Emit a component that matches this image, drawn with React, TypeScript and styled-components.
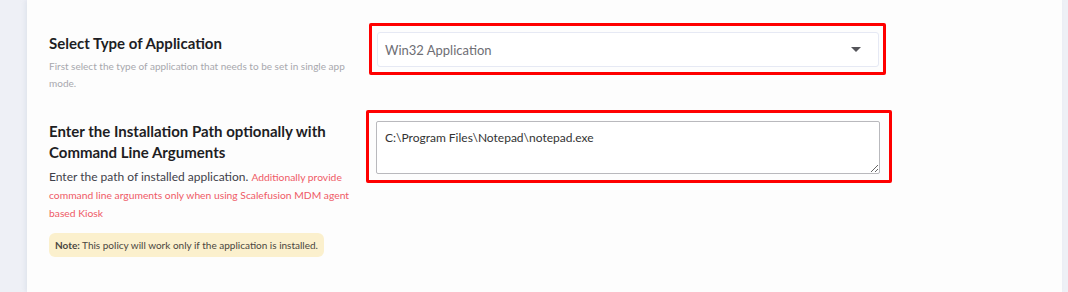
import styled, { createGlobalStyle } from "styled-components";

const Global = createGlobalStyle`
  html, body {
    margin: 0;
    padding: 0;
    background: #eef0f6;
    font-family: Lato, "Noto Sans", sans-serif;
  }
`;

const Page = styled.div`
  display: flex;
  height: 292px;
  overflow: hidden;
`;

const Rail = styled.div`
  width: 27px;
  flex-shrink: 0;
  background: #eef0f6;
`;

const Panel = styled.div`
  flex: 1;
  margin-right: 6px;
  background: #fdfdfd;
  box-shadow: -2px 0 4px rgba(200, 205, 220, 0.35);
  padding: 23px 0 0 22px;
  box-sizing: border-box;
`;

const Row = styled.div<{ $gap?: number }>`
  display: flex;
  align-items: flex-start;
  margin-top: ${(p) => p.$gap ?? 0}px;
`;

const Label = styled.div<{ $top: number }>`
  width: 304px;
  flex-shrink: 0;
  padding-top: ${(p) => p.$top}px;
  margin-right: 13px;
`;

const Title = styled.div`
  font-size: 15px;
  font-weight: 700;
  line-height: 21px;
  color: #1e1e24;
`;

const Hint = styled.div`
  margin-top: 4px;
  font-size: 10px;
  line-height: 17px;
  color: #a8a8ad;
`;

const Desc = styled.div`
  margin-top: 5px;
  font-size: 12px;
  line-height: 18px;
  color: #3f3f4a;
`;

const Warn = styled.span`
  font-size: 10.3px;
  line-height: 18px;
  color: #ef5a66;
`;

const Note = styled.div`
  display: inline-block;
  margin-top: 11px;
  padding: 5px 6px;
  background: #fbf0cd;
  border-radius: 6px;
  font-size: 10px;
  line-height: 14px;
  color: #4a4640;
  b {
    font-weight: 700;
  }
`;

const Highlight = styled.div<{ $w: number; $pad: string; $shift?: number }>`
  width: ${(p) => p.$w}px;
  box-sizing: border-box;
  border: 3px solid #ff0000;
  border-radius: 2px;
  padding: ${(p) => p.$pad};
  margin-left: ${(p) => p.$shift ?? 0}px;
`;

const Select = styled.div`
  height: 35px;
  box-sizing: border-box;
  border: 1px solid #e6e9f4;
  border-radius: 3px;
  background: #fff;
  display: flex;
  align-items: center;
  justify-content: space-between;
  padding: 0 17px 0 7px;
  font-size: 13px;
  color: #6e6e74;
`;

const Caret = styled.span`
  width: 0;
  height: 0;
  border-left: 5px solid transparent;
  border-right: 5px solid transparent;
  border-top: 5px solid #55555a;
`;

const Area = styled.textarea`
  display: block;
  width: 100%;
  height: 53px;
  box-sizing: border-box;
  border: 1px solid #b9b9bd;
  border-radius: 2px;
  padding: 8px 8px;
  font-family: Lato, "Noto Sans", sans-serif;
  font-size: 12px;
  color: #333;
  background: #fff;
  outline: none;
`;

export default function App() {
  return (
    <>
      <Global />
      <Page>
        <Rail />
        <Panel>
          <Row>
            <Label $top={10}>
              <Title>Select Type of Application</Title>
              <Hint>
                First select the type of application that needs to be set in single app mode.
              </Hint>
            </Label>
            <Highlight $w={517} $pad="6px 4px 5px 5px" $shift={3}>
              <Select>
                Win32 Application
                <Caret />
              </Select>
            </Highlight>
          </Row>
          <Row $gap={18}>
            <Label $top={11}>
              <Title>Enter the Installation Path optionally with Command Line Arguments</Title>
              <Desc>
                Enter the path of installed application.{" "}
                <Warn>
                  Additionally provide command line arguments only when using Scalefusion MDM
                  agent based Kiosk
                </Warn>
              </Desc>
              <Note>
                <b>Note:</b> This policy will work only if the application is installed.
              </Note>
            </Label>
            <Highlight $w={526} $pad="8px 9px 6px 7px">
              <Area defaultValue={"C:\\Program Files\\Notepad\\notepad.exe"} />
            </Highlight>
          </Row>
        </Panel>
      </Page>
    </>
  );
}
